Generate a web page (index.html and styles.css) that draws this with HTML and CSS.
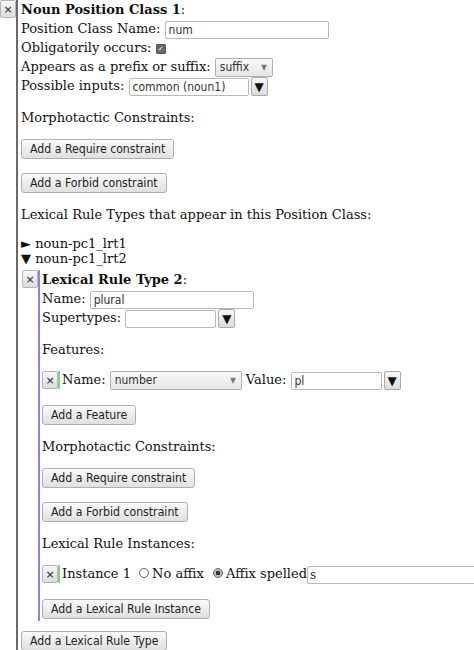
FILE: index.html
```html
<!DOCTYPE html>
<html lang="en">
<head>
  <meta charset="UTF-8" />
  <title>Noun Position Class 1</title>
  <link rel="stylesheet" href="styles.css">
</head>
<body>
  <div class="section">
    <button class="del">×</button>
    <div class="body outer">
      <div class="line"><b>Noun Position Class 1</b>:</div>
      <div class="line">Position Class Name: <input type="text" class="txt w-name" value="num"></div>
      <div class="line">Obligatorily occurs: <span class="check">✓</span></div>
      <div class="line">Appears as a prefix or suffix: <span class="sel w-suffix">suffix<i>▼</i></span></div>
      <div class="line">Possible inputs: <input type="text" class="txt w-inputs" value="common (noun1)"><button class="drop">▼</button></div>

      <p class="first">Morphotactic Constraints:</p>
      <button class="btn">Add a Require constraint</button>
      <button class="btn">Add a Forbid constraint</button>

      <p>Lexical Rule Types that appear in this Position Class:</p>
      <div class="tree">
        <div class="node">► noun-pc1_lrt1</div>
        <div class="node">▼ noun-pc1_lrt2</div>
      </div>

      <div class="section inner-wrap">
        <button class="del">×</button>
        <div class="body inner">
          <div class="line"><b>Lexical Rule Type 2</b>:</div>
          <div class="line">Name: <input type="text" class="txt w-lname" value="plural"></div>
          <div class="line">Supertypes: <input type="text" class="txt w-super" value=""><button class="drop">▼</button></div>

          <p class="first">Features:</p>
          <div class="row">
            <button class="del">×</button>
            <div class="leaf">
              Name: <span class="sel w-feat">number<i>▼</i></span>
              Value: <input type="text" class="txt w-value" value="pl"><button class="drop">▼</button>
            </div>
          </div>
          <button class="btn">Add a Feature</button>

          <p>Morphotactic Constraints:</p>
          <button class="btn">Add a Require constraint</button>
          <button class="btn">Add a Forbid constraint</button>

          <p>Lexical Rule Instances:</p>
          <div class="row">
            <button class="del">×</button>
            <div class="leaf">
              Instance 1 <span class="radio"></span>No affix <span class="radio on"></span>Affix spelled<input type="text" class="txt w-affix" value="s">
            </div>
          </div>
          <button class="btn">Add a Lexical Rule Instance</button>
        </div>
      </div>
      <button class="btn last">Add a Lexical Rule Type</button>
    </div>
  </div>
</body>
</html>
```

FILE: styles.css
```css
body {
  margin: 0;
  font-family: 'DejaVu Serif', serif;
  font-size: 13px;
  color: #111;
  background: white;
  overflow: hidden;
}
.section {
  display: flex;
  align-items: flex-start;
}
.body {
  flex: 1;
  min-width: 0;
  padding-left: 3px;
}
.outer {
  border-left: 2px solid #6a6a6a;
  min-height: 100vh;
}
.inner {
  border-left: 2px solid #8585e6;
  padding-left: 2px;
  padding-bottom: 2px;
}
.inner-wrap {
  margin-top: 4px;
}
.inner-wrap > .del {
  margin-left: 1px;
}
.line {
  height: 19px;
  line-height: 19px;
  white-space: nowrap;
}
.tree {
  margin-bottom: 4px;
}
.node {
  height: 15px;
  line-height: 15px;
  white-space: nowrap;
}
p {
  margin: 12px 0;
  line-height: 19px;
  white-space: nowrap;
}
p.first {
  margin-top: 13px;
}
.del {
  width: 16px;
  height: 18px;
  padding: 0;
  margin: 0;
  font: 11px 'DejaVu Sans', sans-serif;
  color: #222;
  background: linear-gradient(#f6f6f6, #dedede);
  border: 1px solid #b5b5b5;
  border-radius: 2px;
  flex: none;
}
.row {
  display: flex;
  align-items: center;
  margin-bottom: 16px;
}
.leaf {
  border-left: 2px solid #7ed87e;
  padding-left: 2px;
  height: 18px;
  line-height: 18px;
  white-space: nowrap;
}
.txt {
  font: 12px 'DejaVu Sans Condensed', 'DejaVu Sans', sans-serif;
  color: #333;
  height: 18px;
  box-sizing: border-box;
  border: 1px solid #b8b8b8;
  border-radius: 2px;
  padding: 0 3px;
  vertical-align: middle;
  margin: 0;
}
.w-name { width: 164px; }
.w-inputs { width: 120px; }
.w-lname { width: 164px; }
.w-super { width: 91px; }
.w-value { width: 91px; }
.w-affix { width: 180px; padding-left: 2px; font-family: 'DejaVu Serif', serif; }
.drop {
  width: 17px;
  height: 19px;
  padding: 0;
  margin: 0 0 0 2px;
  font: 12px 'DejaVu Sans', sans-serif;
  color: #111;
  background: linear-gradient(#f8f8f8, #dcdcdc);
  border: 1px solid #aaa;
  border-radius: 2px;
  vertical-align: middle;
}
.sel {
  display: inline-block;
  box-sizing: border-box;
  height: 19px;
  font: 12px/17px 'DejaVu Sans Condensed', 'DejaVu Sans', sans-serif;
  color: #333;
  border: 1px solid #b0b0b0;
  border-radius: 2px;
  background: linear-gradient(#f9f9f9, #e6e6e6);
  padding: 0 4px;
  vertical-align: middle;
  position: relative;
}
.sel i {
  font-style: normal;
  font-size: 8px;
  color: #777;
  position: absolute;
  right: 5px;
  top: 0;
}
.w-suffix { width: 58px; }
.w-feat { width: 132px; }
.check {
  display: inline-block;
  width: 8px;
  height: 8px;
  border: 1px solid #555;
  background: #666;
  color: white;
  font: bold 7px/8px 'DejaVu Sans', sans-serif;
  text-align: center;
  border-radius: 1px;
  vertical-align: 1px;
}
.radio {
  display: inline-block;
  width: 8px;
  height: 8px;
  border: 1px solid #666;
  border-radius: 50%;
  background: white;
  margin: 0 3px 0 4px;
  vertical-align: 0;
}
.radio.on {
  background: radial-gradient(#333 35%, #bbb 45%);
  margin-left: 5px;
}
.btn {
  display: block;
  height: 20px;
  padding: 0 8px;
  margin: 0;
  font: 12.2px 'DejaVu Sans Condensed', 'DejaVu Sans', sans-serif;
  color: #222;
  background: linear-gradient(#fafafa, #e0e0e0);
  border: 1px solid #b0b0b0;
  border-radius: 3px;
}
.btn + .btn {
  margin-top: 14px;
}
.inner-wrap + .last {
  margin-top: 10px;
}
```
